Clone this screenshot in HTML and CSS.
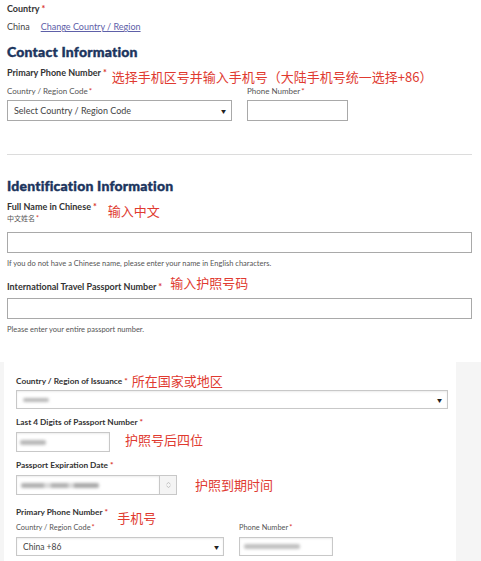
FILE: index.html
```html
<!DOCTYPE html>
<html lang="zh">
<head>
<meta charset="utf-8">
<title>Form</title>
<link rel="stylesheet" href="styles.css">
</head>
<body>
<div class="top">
  <div class="label l-country">Country<span class="req">*</span></div>
  <div class="country-row"><span class="china">China</span><a class="link" href="#">Change Country / Region</a></div>
  <h2 class="heading h-contact">Contact Information</h2>
  <div class="note-row phone-head">
    <div class="label">Primary Phone Number<span class="req">*</span></div>
    <div class="note note-phone">选择手机区号并输入手机号（大陆手机号统一选择+86）</div>
  </div>
  <div class="pair sub-row">
    <div class="sub col-code">Country / Region Code<span class="req-s">*</span></div>
    <div class="sub">Phone Number<span class="req-s">*</span></div>
  </div>
  <div class="pair ctrl-row">
    <div class="select sel-code"><span>Select Country / Region Code</span><span class="arrow">▼</span></div>
    <div class="input in-phone"></div>
  </div>
  <div class="rule"></div>
  <h2 class="heading h-id">Identification Information</h2>
  <div class="note-row name-head">
    <div class="name-labels">
      <div class="label">Full Name in Chinese<span class="req">*</span></div>
      <div class="sub cn">中文姓名<span class="req-s">*</span></div>
    </div>
    <div class="note note-name">输入中文</div>
  </div>
  <div class="input wide in-name"></div>
  <div class="help help-name">If you do not have a Chinese name, please enter your name in English characters.</div>
  <div class="note-row pass-head">
    <div class="label">International Travel Passport Number<span class="req">*</span></div>
    <div class="note note-pass">输入护照号码</div>
  </div>
  <div class="input wide in-pass"></div>
  <div class="help help-pass">Please enter your entire passport number.</div>
</div>
<div class="bottom">
  <div class="card">
    <div class="note-row iss-head">
      <div class="label small">Country / Region of Issuance<span class="req">*</span></div>
      <div class="note note-iss">所在国家或地区</div>
    </div>
    <div class="select light sel-iss"><span class="blur b-iss"></span><span class="arrow">▼</span></div>
    <div class="label small l-last4">Last 4 Digits of Passport Number<span class="req">*</span></div>
    <div class="note-row last4-row">
      <div class="input light in-last4"><span class="blur b-last4"></span></div>
      <div class="note note-last4">护照号后四位</div>
    </div>
    <div class="label small l-exp">Passport Expiration Date<span class="req">*</span></div>
    <div class="note-row exp-row">
      <div class="date-group">
        <div class="input light in-date"><span class="blur b-date"></span></div>
        <div class="addon"><svg width="5" height="6" viewBox="0 0 5 6"><path d="M2.5 0.5 L4.5 2.2 M2.5 0.5 L0.5 2.2 M2.5 5.5 L4.5 3.8 M2.5 5.5 L0.5 3.8" stroke="#b5b5b5" stroke-width="0.8" fill="none"/></svg></div>
      </div>
      <div class="note note-exp">护照到期时间</div>
    </div>
    <div class="note-row phone2-head">
      <div class="label small">Primary Phone Number<span class="req">*</span></div>
      <div class="note note-phone2">手机号</div>
    </div>
    <div class="pair2 sub-row2">
      <div class="sub small col-code2">Country / Region Code<span class="req-s">*</span></div>
      <div class="sub small">Phone Number<span class="req-s">*</span></div>
    </div>
    <div class="pair2 ctrl-row2">
      <div class="select light sel-code2"><span>China +86</span><span class="arrow">▼</span></div>
      <div class="input light in-phone2"><span class="blur b-phone2"></span></div>
    </div>
  </div>
  <div class="side"></div>
</div>
</body>
</html>
```

FILE: styles.css
```css
html, body {
  margin: 0;
  padding: 0;
  background: #ffffff;
}
body {
  width: 481px;
  height: 561px;
  overflow: hidden;
  font-family: Lato, "Noto Sans", "Noto Sans CJK SC", sans-serif;
  color: #333333;
}
.top {
  padding: 3px 9px 0 7px;
  height: 359px;
  box-sizing: content-box;
}
.label {
  font-size: 9px;
  font-weight: bold;
  line-height: 12px;
  color: #333333;
  white-space: nowrap;
}
.label.small {
  font-size: 8.3px;
}
.req {
  color: #d9342b;
  margin-left: 2px;
}
.req-s {
  color: #d9342b;
  margin-left: 1px;
}
.country-row {
  margin-top: 6px;
  font-size: 9px;
  line-height: 12px;
  color: #444444;
}
.china {
  margin-right: 11px;
}
.link {
  color: #5e60a8;
  text-decoration: underline;
}
.heading {
  margin: 0;
  font-family: Lato, sans-serif;
  font-weight: 900;
  font-size: 14px;
  line-height: 18px;
  color: #1c355e;
  letter-spacing: 0.2px;
  -webkit-text-stroke: 0.4px #1c355e;
}
.h-contact {
  margin-top: 10px;
}
.note-row {
  display: flex;
  align-items: flex-start;
}
.note {
  font-family: "Noto Sans CJK SC", sans-serif;
  font-size: 13px;
  line-height: 14px;
  color: #e03a30;
  white-space: nowrap;
}
.phone-head {
  margin-top: 6px;
  height: 18px;
}
.note-phone {
  margin-top: 2.5px;
  margin-left: 5px;
}
.sub {
  font-size: 8px;
  line-height: 10px;
  color: #555555;
  white-space: nowrap;
}
.sub.small {
  font-size: 7.4px;
}
.pair {
  display: flex;
}
.sub-row {
  margin-top: 1px;
}
.col-code {
  width: 240px;
}
.ctrl-row {
  margin-top: 4px;
}
.select {
  display: flex;
  align-items: center;
  justify-content: space-between;
  box-sizing: border-box;
  border: 1px solid #a9a9a9;
  background: #ffffff;
  font-size: 9px;
  color: #444444;
}
.sel-code {
  width: 225px;
  height: 21px;
  padding: 0 5px 0 6px;
  margin-right: 15px;
}
.arrow {
  font-size: 5px;
  color: #222222;
}
.input {
  box-sizing: border-box;
  border: 1px solid #a9a9a9;
  background: #ffffff;
}
.in-phone {
  width: 101px;
  height: 21px;
}
.rule {
  margin-top: 33px;
  height: 1px;
  background: #dcdcdc;
}
.h-id {
  margin-top: 22px;
}
.name-head {
  margin-top: 6px;
}
.sub.cn {
  font-size: 7px;
  line-height: 11px;
}
.note-name {
  margin-top: 3px;
  margin-left: 11px;
}
.wide {
  width: 465px;
  height: 21px;
}
.in-name {
  margin-top: 8px;
}
.help {
  font-size: 7.5px;
  line-height: 10px;
  color: #555555;
  white-space: nowrap;
}
.help-name {
  margin-top: 6px;
}
.pass-head {
  margin-top: 12px;
  height: 12px;
}
.note-pass {
  margin-top: -5px;
  margin-left: 8px;
}
.in-pass {
  margin-top: 5px;
}
.help-pass {
  margin-top: 6px;
}

.bottom {
  display: flex;
  height: 199px;
  background: #f5f5f5;
}
.card {
  margin-left: 4px;
  width: 452px;
  background: #ffffff;
  padding: 13px 0 0 12px;
  box-sizing: border-box;
}
.side {
  flex: 1;
}
.iss-head {
  height: 12px;
}
.note-iss {
  margin-top: -1px;
  margin-left: 4px;
}
.light {
  border-color: #c8c8c8;
  box-shadow: inset 0 1px 2px rgba(0, 0, 0, 0.08);
}
.sel-iss {
  margin-top: 3px;
  width: 432px;
  height: 19px;
  padding: 0 5px 0 4px;
}
.blur {
  display: block;
  background: #b8b8b8;
  filter: blur(1.5px);
  border-radius: 2px;
}
.b-iss {
  width: 26px;
  height: 4px;
  margin-left: 2px;
}
.l-last4 {
  margin-top: 7px;
}
.last4-row {
  margin-top: 4px;
}
.in-last4 {
  width: 94px;
  height: 20px;
  display: flex;
  align-items: center;
  padding-left: 3px;
}
.b-last4 {
  width: 26px;
  height: 5px;
}
.note-last4 {
  margin-top: 1px;
  margin-left: 15px;
}
.l-exp {
  margin-top: 7px;
}
.exp-row {
  margin-top: 4px;
  align-items: center;
}
.date-group {
  display: flex;
}
.in-date {
  width: 144px;
  height: 20px;
  display: flex;
  align-items: center;
  padding-left: 4px;
}
.b-date {
  width: 78px;
  height: 5px;
  background: linear-gradient(90deg, #b0b0b0 0 30%, #d8d8d8 30% 38%, #b0b0b0 38% 60%, #d8d8d8 60% 68%, #a8a8a8 68% 100%);
}
.addon {
  width: 17px;
  height: 20px;
  box-sizing: border-box;
  border: 1px solid #c8c8c8;
  border-left: none;
  background: #f4f4f4;
  display: flex;
  align-items: center;
  justify-content: center;
}
.note-exp {
  margin-left: 18px;
}
.phone2-head {
  margin-top: 11px;
  height: 17px;
}
.note-phone2 {
  margin-top: 5px;
  margin-left: 9px;
}
.pair2 {
  display: flex;
}
.col-code2 {
  width: 223px;
}
.ctrl-row2 {
  margin-top: 4px;
}
.sel-code2 {
  width: 208px;
  height: 19px;
  padding: 0 4px 0 6px;
  margin-right: 15px;
  font-size: 8.5px;
}
.in-phone2 {
  width: 94px;
  height: 19px;
  display: flex;
  align-items: center;
  padding-left: 4px;
}
.b-phone2 {
  width: 56px;
  height: 5px;
  background: #c0c0c0;
}
```
